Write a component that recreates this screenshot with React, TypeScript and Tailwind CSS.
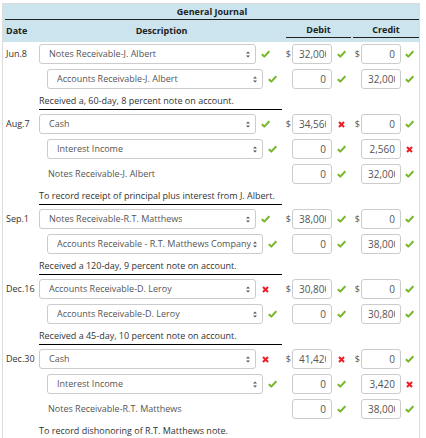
import React from "react";

type Row = {
  acct: string;
  credit?: boolean; // indented credit line
  plain?: boolean; // plain text instead of a select
  acctOk?: boolean;
  dr: string;
  drOk: boolean;
  cr: string;
  crOk: boolean;
  dollar?: boolean;
};

type Entry = { date: string; rows: Row[]; memo: string; last?: boolean };

const ENTRIES: Entry[] = [
  {
    date: "Jun.8",
    rows: [
      { acct: "Notes Receivable-J. Albert", acctOk: true, dr: "32,000", drOk: true, cr: "0", crOk: true, dollar: true },
      { acct: "Accounts Receivable-J. Albert", credit: true, acctOk: true, dr: "0", drOk: true, cr: "32,000", crOk: true },
    ],
    memo: "Received a, 60-day, 8 percent note on account.",
  },
  {
    date: "Aug.7",
    rows: [
      { acct: "Cash", acctOk: true, dr: "34,560", drOk: false, cr: "0", crOk: true, dollar: true },
      { acct: "Interest Income", credit: true, acctOk: true, dr: "0", drOk: true, cr: "2,560", crOk: false },
      { acct: "Notes Receivable-J. Albert", credit: true, plain: true, dr: "0", drOk: true, cr: "32,000", crOk: true },
    ],
    memo: "To record receipt of principal plus interest from J. Albert.",
  },
  {
    date: "Sep.1",
    rows: [
      { acct: "Notes Receivable-R.T. Matthews", acctOk: true, dr: "38,000", drOk: true, cr: "0", crOk: true, dollar: true },
      { acct: "Accounts Receivable - R.T. Matthews Company", credit: true, acctOk: true, dr: "0", drOk: true, cr: "38,000", crOk: true },
    ],
    memo: "Received a 120-day, 9 percent note on account.",
  },
  {
    date: "Dec.16",
    rows: [
      { acct: "Accounts Receivable-D. Leroy", acctOk: false, dr: "30,800", drOk: true, cr: "0", crOk: true, dollar: true },
      { acct: "Accounts Receivable-D. Leroy", credit: true, acctOk: true, dr: "0", drOk: true, cr: "30,800", crOk: true },
    ],
    memo: "Received a 45-day, 10 percent note on account.",
  },
  {
    date: "Dec.30",
    rows: [
      { acct: "Cash", acctOk: false, dr: "41,420", drOk: false, cr: "0", crOk: true, dollar: true },
      { acct: "Interest Income", credit: true, acctOk: true, dr: "0", drOk: true, cr: "3,420", crOk: false },
      { acct: "Notes Receivable-R.T. Matthews", credit: true, plain: true, dr: "0", drOk: true, cr: "38,000", crOk: true },
    ],
    memo: "To record dishonoring of R.T. Matthews note.",
    last: true,
  },
];

function Mark({ ok }: { ok: boolean }) {
  if (ok) {
    return (
      <svg width="9" height="8" viewBox="0 0 9 8" aria-hidden>
        <path d="M0.8 4.3 L3.3 6.6 L8.3 1.2" fill="none" stroke="#76b82a" strokeWidth="2" strokeLinejoin="round" />
      </svg>
    );
  }
  return (
    <svg width="7" height="7" viewBox="0 0 7 7" aria-hidden>
      <path d="M1 1 L6 6 M6 1 L1 6" stroke="#ee1c25" strokeWidth="2.1" />
    </svg>
  );
}

function Arrows() {
  return (
    <svg width="4" height="7" viewBox="0 0 4 7" aria-hidden>
      <path d="M0 2.6 L2 0.4 L4 2.6 Z M0 4.4 L2 6.6 L4 4.4 Z" fill="#555" />
    </svg>
  );
}

// input-like box: text is clipped at the content edge, like a real <input>
function Amount({ value }: { value: string }) {
  return (
    <div className="h-[20px] w-[40px] rounded-[3px] border border-[#ccc] bg-white pl-[6px] pr-[5px] text-[10px] leading-[18px] text-[#555]">
      <div className="overflow-hidden whitespace-nowrap text-right">{value}</div>
    </div>
  );
}

function JournalRow({ row, date, top }: { row: Row; date?: string; top: string }) {
  return (
    <div className={`flex h-[20px] items-center ${top}`}>
      <div className="w-[36px] pl-[3px] text-[#333]">{date}</div>
      <div className="flex w-[245px] items-center">
        {row.plain ? (
          <div className="ml-[8px] pl-[1px] text-[#555]">{row.acct}</div>
        ) : (
          <>
            <div
              className={`flex h-[20px] items-center justify-between rounded-[3px] border border-[#ccc] bg-white pl-[9px] pr-[5px] text-[#555] ${
                row.credit ? "ml-[8px] w-[216px]" : "w-[217px]"
              }`}
            >
              <span className="overflow-hidden whitespace-nowrap">{row.acct}</span>
              <span className="ml-[1px] shrink-0">
                <Arrows />
              </span>
            </div>
            <div className="flex w-[18px] justify-center">
              <Mark ok={!!row.acctOk} />
            </div>
          </>
        )}
      </div>
      <div className="flex w-[66px] items-center">
        <div className="w-[8px] pr-[1px] text-right text-[#555]">{row.dollar ? "$" : ""}</div>
        <Amount value={row.dr} />
        <div className="flex w-[18px] justify-center">
          <Mark ok={row.drOk} />
        </div>
      </div>
      <div className="flex w-[68px] items-center">
        <div className="w-[11px] pr-[1px] text-right text-[#555]">{row.dollar ? "$" : ""}</div>
        <Amount value={row.cr} />
        <div className="flex w-[17px] justify-center">
          <Mark ok={row.crOk} />
        </div>
      </div>
    </div>
  );
}

export default function App() {
  return (
    <div className="h-[438px] overflow-hidden bg-white pt-[3px] text-[9px] font-['Open_Sans',sans-serif]">
      <div className="ml-[2px] w-[418px] border-x border-t border-[#dcdcdc]">
        <div className="h-[38px] bg-[#cbe4ed] font-bold text-[#222]">
          <div className="ml-[2px] flex h-[16px] items-center justify-center border-b border-[#222] pt-[1px]">
            General Journal
          </div>
          <div className="flex h-[21px] items-center">
            <div className="w-[36px] pl-[3px]">Date</div>
            <div className="w-[245px] text-center">Description</div>
            <div className="ml-[2px] w-[65px] border-b border-[#222] pb-[1px] text-center">Debit</div>
            <div className="ml-[2px] w-[66px] border-b border-[#222] pb-[1px] text-center">Credit</div>
          </div>
        </div>
        {ENTRIES.map((e, ei) => (
          <div key={ei}>
            {e.rows.map((r, ri) => (
              <JournalRow
                key={ri}
                row={r}
                date={ri === 0 ? e.date : undefined}
                top={ri > 0 ? "mt-[5px]" : ei === 0 ? "mt-[2px]" : "mt-[4px]"}
              />
            ))}
            <div className="flex">
              <div className="w-[36px]" />
              <div
                className={`flex h-[21px] w-[243px] items-center pt-[3px] text-[#333] ${
                  e.last ? "" : "border-b border-black"
                }`}
              >
                {e.memo}
              </div>
            </div>
          </div>
        ))}
      </div>
    </div>
  );
}
